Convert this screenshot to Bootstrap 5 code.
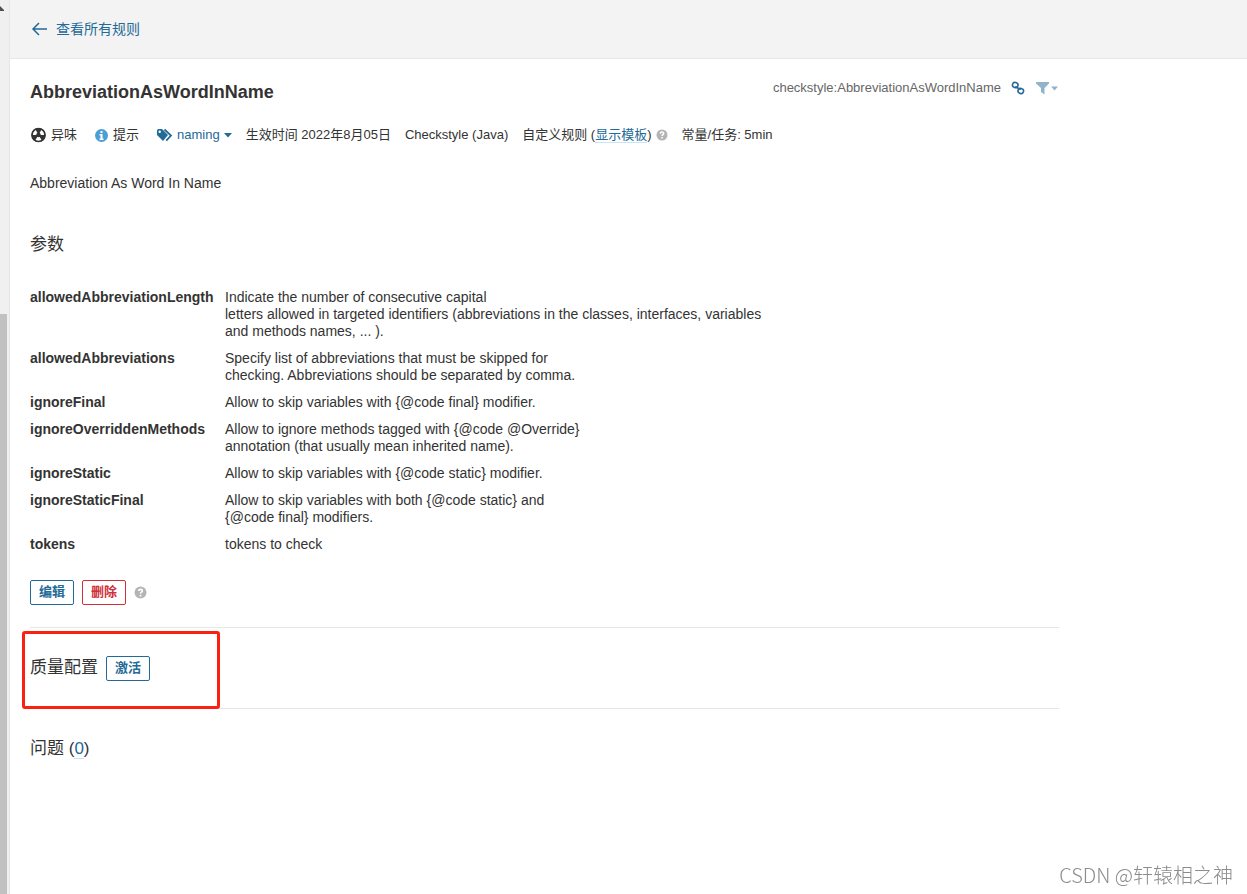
<!DOCTYPE html>
<html lang="zh-CN">
<head>
<meta charset="utf-8">
<meta name="viewport" content="width=device-width, initial-scale=1">
<title>AbbreviationAsWordInName</title>
<link href="https://cdn.jsdelivr.net/npm/bootstrap@5.3.0/dist/css/bootstrap.min.css" rel="stylesheet">
<style>
  body { font-family: "Liberation Sans", "Noto Sans CJK SC", sans-serif; font-size: 14px; line-height: 17px; color: #333; }
  a { color: #236a97; text-decoration: none; }
  svg { display: block; flex: none; }
  .side-scroll { width: 10px; background: #f0f0f0; border-right: 1px solid #e6e6e6; }
  .side-arrow { height: 314px; padding-top: 6px; }
  .side-thumb { width: 7px; background: #c1c1c1; }
  .page-top { height: 59px; background: #f3f3f3; border-bottom: 1px solid #e6e6e6; padding: 0 21px; }
  .rule { max-width: 1049px; padding: 20px 0 0 20px; }
  .rule h1 { font-size: 18px; line-height: 26px; font-weight: 700; margin: 0; }
  .rule h2 { font-size: 17px; line-height: 24px; font-weight: 400; margin: 0; }
  .rule .params-title { margin-top: 41px; }
  .rule-key { font-size: 13px; color: #666; gap: 10px; }
  .meta { font-size: 13px; margin-top: 19px; gap: 14px; height: 20px; }
  .meta li { display: flex; align-items: center; gap: 4px; }
  .meta .with-icon { margin-right: 3px; }
  .meta svg { position: relative; top: 1px; }
  .underlined { border-bottom: 1px solid #cae3f2; }
  .desc { margin: 31px 0 0; height: 17px; }
  .params { margin: 27px 0 0; }
  .params th { width: 195px; padding: 5px 0; font-weight: 700; vertical-align: top; }
  .params td { padding: 5px 0; vertical-align: top; }
  .actions { margin: 22px 0; }
  .btn-rule { --bs-btn-padding-x: 8px; --bs-btn-padding-y: 0; --bs-btn-border-radius: 2px; font-size: 13px; font-weight: 700; line-height: 21px; height: 25px; padding-bottom: 2px; color: #236a97; border-color: #236a97; background: #fff; }
  .btn-remove { color: #d02f3a; border-color: #d02f3a; }
  .section { border-top: 1px solid #e6e6e6; height: 81px; position: relative; }
  .highlight { position: absolute; z-index: 1; left: -8px; top: 3px; width: 198px; height: 78px; border: 3px solid #fb2010; border-radius: 3px; pointer-events: none; }
  .watermark { position: fixed; right: 14px; bottom: 6px; font-family: "Noto Sans CJK SC", sans-serif; font-weight: 300; font-size: 20px; line-height: 26px; color: #8c8c8c; }
</style>
</head>
<body>
<div class="d-flex min-vh-100">
  <div class="side-scroll d-flex flex-column flex-shrink-0">
    <div class="side-arrow"><svg width="5" height="5" viewBox="0 0 5 5"><path d="M0 0 4 4V5H0z" fill="#505050"/></svg></div>
    <div class="side-thumb flex-grow-1"></div>
  </div>
  <div class="flex-grow-1">
    <header class="page-top d-flex align-items-center">
      <a href="#" class="d-flex align-items-center gap-2">
        <svg width="17" height="16" viewBox="0 0 17 16" fill="none" stroke="#236a97" stroke-width="1.5"><path d="M8 2 2 8l6 6M2 8h14"/></svg>
        <span>查看所有规则</span>
      </a>
    </header>
    <main class="rule">
      <div class="d-flex justify-content-between">
        <h1>AbbreviationAsWordInName</h1>
        <div class="rule-key d-flex align-items-center align-self-start">
          <span>checkstyle:AbbreviationAsWordInName</span>
          <a href="#" aria-label="链接"><svg width="14" height="14" viewBox="0 0 14 14" fill="none" stroke="#236a97" stroke-width="1.6"><rect x="1.500" y="1.500" width="5.500" height="5" rx="2.400" transform="rotate(20 4 4)"/><rect x="7" y="7.500" width="5.500" height="5" rx="2.400" transform="rotate(20 10 10)"/><path d="M4.500 5.200C5.500 8 8.500 5.800 9.500 9"/></svg></a>
          <a href="#" aria-label="筛选"><svg width="24" height="14" viewBox="0 0 24 14" fill="#91b4cb"><path d="M1 1h13v1.500L9.500 7v6.500L6 11V7L1 2.500zM16 5.500h7l-3.500 4z"/></svg></a>
        </div>
      </div>
      <ul class="meta list-unstyled d-flex mb-0">
        <li class="with-icon"><svg width="17" height="16" viewBox="0 0 16 16"><circle cx="8" cy="8" r="7" fill="#333"/><path d="M8 8 4.600 2.600A6.300 6.300 0 0 1 11.400 2.600zM8 8H1.800a6.300 6.300 0 0 0 3.200 5.500zM8 8h6.200a6.300 6.300 0 0 1-3.200 5.500z" fill="#fff" transform="rotate(180 8 8)"/><circle cx="8" cy="8" r="2.300" fill="#333"/><circle cx="8" cy="8" r="6.500" fill="none" stroke="#333" stroke-width="1.700"/></svg><span>异味</span></li>
        <li class="with-icon"><svg width="15" height="15" viewBox="0 0 15 15"><circle cx="7.500" cy="7.500" r="6.500" fill="#4b9fd5"/><path d="M6.500 3h2v2h-2zM5.500 6h3v4.500h1V12h-4v-1.500h1v-3h-1z" fill="#fff"/></svg><span>提示</span></li>
        <li><a href="#" class="d-flex align-items-center gap-1"><svg width="17" height="14" viewBox="0 0 17 14"><path d="M1 2.500Q1 1 2.500 1H6l6 6-5 6L1 7z" fill="#236a97"/><circle cx="3.700" cy="3.700" r="1.200" fill="#fff"/><path d="M8.500 1.500 15 7.500l-4.800 5.200" fill="none" stroke="#236a97" stroke-width="1.800"/></svg><span>naming</span><svg width="8" height="5" viewBox="0 0 8 5"><path d="M0 0h8L4 4.500z" fill="#236a97"/></svg></a></li>
        <li>生效时间 2022年8月05日</li>
        <li>Checkstyle (Java)</li>
        <li><span>自定义规则 (<a href="#" class="underlined">显示模板</a>)</span><svg width="12" height="12" viewBox="0 0 12 12"><circle cx="6" cy="6" r="5.500" fill="#b4b4b4"/><path d="M4.300 4.700C4.300 2.500 7.800 2.600 7.700 4.600 7.700 5.700 6 5.700 6 7M6 8.100v1.500" fill="none" stroke="#fff" stroke-width="1.500"/></svg></li>
        <li>常量/任务: 5min</li>
      </ul>
      <p class="desc">Abbreviation As Word In Name</p>
      <h2 class="params-title">参数</h2>
      <table class="params">
        <tbody>
        <tr><th scope="row">allowedAbbreviationLength</th><td>Indicate the number of consecutive capital<br>letters allowed in targeted identifiers (abbreviations in the classes, interfaces, variables<br>and methods names, ... ).</td></tr>
        <tr><th scope="row">allowedAbbreviations</th><td>Specify list of abbreviations that must be skipped for<br>checking. Abbreviations should be separated by comma.</td></tr>
        <tr><th scope="row">ignoreFinal</th><td>Allow to skip variables with {@code final} modifier.</td></tr>
        <tr><th scope="row">ignoreOverriddenMethods</th><td>Allow to ignore methods tagged with {@code @Override}<br>annotation (that usually mean inherited name).</td></tr>
        <tr><th scope="row">ignoreStatic</th><td>Allow to skip variables with {@code static} modifier.</td></tr>
        <tr><th scope="row">ignoreStaticFinal</th><td>Allow to skip variables with both {@code static} and<br>{@code final} modifiers.</td></tr>
        <tr><th scope="row">tokens</th><td>tokens to check</td></tr>
        </tbody>
      </table>
      <div class="actions d-flex align-items-center gap-2">
        <button type="button" class="btn btn-rule">编辑</button>
        <button type="button" class="btn btn-rule btn-remove">删除</button>
        <svg width="13" height="13" viewBox="0 0 12 12"><circle cx="6" cy="6" r="5.500" fill="#b4b4b4"/><path d="M4.300 4.700C4.300 2.500 7.800 2.600 7.700 4.600 7.700 5.700 6 5.700 6 7M6 8.100v1.500" fill="none" stroke="#fff" stroke-width="1.500"/></svg>
      </div>
      <section class="section d-flex align-items-center gap-2">
        <h2>质量配置</h2>
        <button type="button" class="btn btn-rule">激活</button>
        <div class="highlight"></div>
      </section>
      <section class="section d-flex align-items-center">
        <h2>问题 (<a href="#" class="underlined">0</a>)</h2>
      </section>
    </main>
  </div>
</div>
<div class="watermark">CSDN @轩辕相之神</div>
<script src="https://cdn.jsdelivr.net/npm/bootstrap@5.3.0/dist/js/bootstrap.bundle.min.js"></script>
</body>
</html>
